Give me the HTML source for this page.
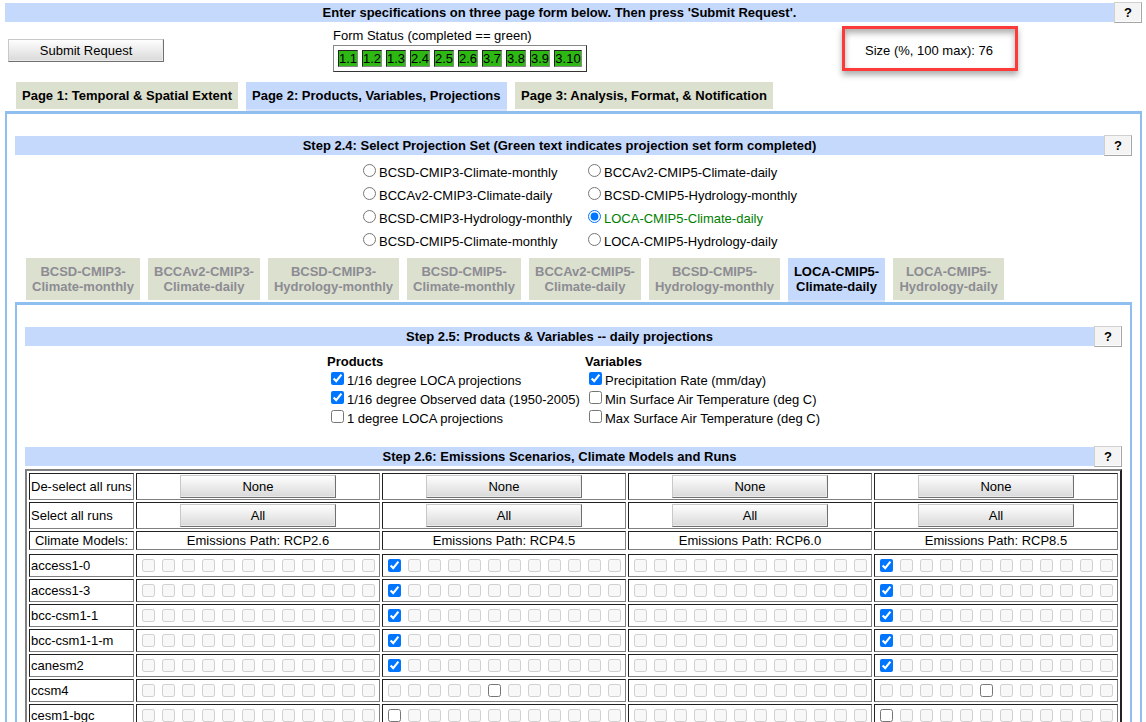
<!DOCTYPE html>
<html><head><meta charset="utf-8">
<style>
html,body{margin:0;padding:0;background:#fff;width:1146px;height:722px;overflow:hidden;position:relative}
body{font-family:"Liberation Sans",sans-serif;font-size:13px;color:#000}
.a{position:absolute}
.t{position:absolute;white-space:nowrap;line-height:15px}
.q{position:absolute;width:28px;height:21px;box-sizing:border-box;border:1px solid;border-color:#d0d0d0 #a6a6a6 #a6a6a6 #d0d0d0;background:#f4f4f4;font-weight:bold;text-align:center;line-height:19px;box-shadow:inset -1px -1px 0 #fbfbfb}
.btn{position:absolute;box-sizing:border-box;border:1px solid;border-color:#c8c8c8 #707070 #707070 #c8c8c8;background:linear-gradient(#fefefe,#d9d9d9);text-align:center;line-height:21px;box-shadow:inset -1px -1px 0 #ebebeb}
.g{position:absolute;height:17px;box-sizing:border-box;border:1px solid;border-color:#222 #8a8a8a #8a8a8a #222;background:#2db814;line-height:15px;text-align:center;font-size:13px}
.size{position:absolute;left:842px;top:26px;width:176px;height:45px;box-sizing:border-box;border:3px solid #fd3a3a;box-shadow:0 4px 6px rgba(0,0,0,.32), inset 0 4px 6px rgba(0,0,0,.32);text-align:center;line-height:15px;padding-top:14px;padding-right:2px}
.tab{position:absolute;box-sizing:border-box;padding:6px 6px 0 6px;font-weight:bold;line-height:15px;white-space:nowrap}
.st{text-align:center;padding-left:0;padding-right:0}
input{position:absolute;margin:0;width:13px;height:13px}
</style></head><body>
<div class="a" style="left:5px;top:3px;width:1109px;height:19px;background:#c5d9fd"></div>
<div class="t" style="left:5px;width:1109px;top:5px;text-align:center;font-weight:bold;">Enter specifications on three page form below. Then press 'Submit Request'.</div>
<div class="q" style="left:1114px;top:2px">?</div>
<div class="btn" style="left:8px;top:39px;width:156px;height:23px">Submit Request</div>
<div class="t" style="left:333px;top:28px;">Form Status (completed == green)</div>
<div class="a" style="left:333px;top:45px;width:254px;height:27px;box-sizing:border-box;border:1px solid;border-color:#888 #333 #333 #888"></div>
<div class="g" style="left:338px;top:50px;width:20px">1.1</div>
<div class="g" style="left:362px;top:50px;width:20px">1.2</div>
<div class="g" style="left:386px;top:50px;width:20px">1.3</div>
<div class="g" style="left:410px;top:50px;width:20px">2.4</div>
<div class="g" style="left:434px;top:50px;width:20px">2.5</div>
<div class="g" style="left:458px;top:50px;width:20px">2.6</div>
<div class="g" style="left:482px;top:50px;width:20px">3.7</div>
<div class="g" style="left:506px;top:50px;width:20px">3.8</div>
<div class="g" style="left:530px;top:50px;width:20px">3.9</div>
<div class="g" style="left:554px;top:50px;width:28px">3.10</div>
<div class="size">Size (%, 100 max): 76</div>
<div class="tab" style="left:16px;top:82px;width:222px;height:27px;background:#dce0ce;color:#000">Page 1: Temporal &amp; Spatial Extent</div>
<div class="tab" style="left:246px;top:82px;width:261px;height:29px;background:#c5d9fd;color:#000;box-shadow:inset 0 -2px 0 #d9e4fb">Page 2: Products, Variables, Projections</div>
<div class="tab" style="left:515px;top:82px;width:258px;height:27px;background:#dce0ce;color:#000">Page 3: Analysis, Format, &amp; Notification</div>
<div class="a" style="left:5px;top:111px;width:1137px;height:700px;box-sizing:border-box;border:2px solid #8fbfef;border-top-width:3px"></div>
<div class="a" style="left:15px;top:136px;width:1089px;height:19px;background:#c5d9fd"></div>
<div class="t" style="left:15px;width:1089px;top:138px;text-align:center;font-weight:bold;">Step 2.4: Select Projection Set (Green text indicates projection set form completed)</div>
<div class="q" style="left:1104px;top:135px">?</div>
<input type="radio" class="rb" style="left:363px;top:164px">
<div class="t" style="left:379px;top:165px;">BCSD-CMIP3-Climate-monthly</div>
<input type="radio" class="rb" style="left:588px;top:164px">
<div class="t" style="left:604px;top:165px;">BCCAv2-CMIP5-Climate-daily</div>
<input type="radio" class="rb" style="left:363px;top:187px">
<div class="t" style="left:379px;top:188px;">BCCAv2-CMIP3-Climate-daily</div>
<input type="radio" class="rb" style="left:588px;top:187px">
<div class="t" style="left:604px;top:188px;">BCSD-CMIP5-Hydrology-monthly</div>
<input type="radio" class="rb" style="left:363px;top:210px">
<div class="t" style="left:379px;top:211px;">BCSD-CMIP3-Hydrology-monthly</div>
<input type="radio" class="rb" style="left:588px;top:210px" checked>
<div class="t" style="left:604px;top:211px;color:#008000;">LOCA-CMIP5-Climate-daily</div>
<input type="radio" class="rb" style="left:363px;top:233px">
<div class="t" style="left:379px;top:234px;">BCSD-CMIP5-Climate-monthly</div>
<input type="radio" class="rb" style="left:588px;top:233px">
<div class="t" style="left:604px;top:234px;">LOCA-CMIP5-Hydrology-daily</div>
<div class="tab st" style="left:26px;top:258px;width:114px;height:42px;background:#dce0ce;color:#8c8c94">BCSD-CMIP3-<br>Climate-monthly</div>
<div class="tab st" style="left:148px;top:258px;width:112px;height:42px;background:#dce0ce;color:#8c8c94">BCCAv2-CMIP3-<br>Climate-daily</div>
<div class="tab st" style="left:268px;top:258px;width:131px;height:42px;background:#dce0ce;color:#8c8c94">BCSD-CMIP3-<br>Hydrology-monthly</div>
<div class="tab st" style="left:407px;top:258px;width:114px;height:42px;background:#dce0ce;color:#8c8c94">BCSD-CMIP5-<br>Climate-monthly</div>
<div class="tab st" style="left:529px;top:258px;width:112px;height:42px;background:#dce0ce;color:#8c8c94">BCCAv2-CMIP5-<br>Climate-daily</div>
<div class="tab st" style="left:649px;top:258px;width:131px;height:42px;background:#dce0ce;color:#8c8c94">BCSD-CMIP5-<br>Hydrology-monthly</div>
<div class="tab st" style="left:788px;top:258px;width:97px;height:44px;background:#c5d9fd;color:#000;box-shadow:inset 0 -2px 0 #d9e4fb">LOCA-CMIP5-<br>Climate-daily</div>
<div class="tab st" style="left:893px;top:258px;width:111px;height:42px;background:#dce0ce;color:#8c8c94">LOCA-CMIP5-<br>Hydrology-daily</div>
<div class="a" style="left:15px;top:302px;width:1117px;height:600px;box-sizing:border-box;border:2px solid #8fbfef;border-top-width:3px"></div>
<div class="a" style="left:25px;top:327px;width:1069px;height:19px;background:#c5d9fd"></div>
<div class="t" style="left:25px;width:1069px;top:329px;text-align:center;font-weight:bold;">Step 2.5: Products &amp; Variables -- daily projections</div>
<div class="q" style="left:1094px;top:326px">?</div>
<div class="t" style="left:327px;top:354px;font-weight:bold;">Products</div>
<input type="checkbox" class="cb" style="left:331px;top:372px" checked>
<div class="t" style="left:347px;top:373px;">1/16 degree LOCA projections</div>
<input type="checkbox" class="cb" style="left:331px;top:391px" checked>
<div class="t" style="left:347px;top:392px;">1/16 degree Observed data (1950-2005)</div>
<input type="checkbox" class="cb" style="left:331px;top:410px">
<div class="t" style="left:347px;top:411px;">1 degree LOCA projections</div>
<div class="t" style="left:585px;top:354px;font-weight:bold;">Variables</div>
<input type="checkbox" class="cb" style="left:589px;top:372px" checked>
<div class="t" style="left:605px;top:373px;">Precipitation Rate (mm/day)</div>
<input type="checkbox" class="cb" style="left:589px;top:391px">
<div class="t" style="left:605px;top:392px;">Min Surface Air Temperature (deg C)</div>
<input type="checkbox" class="cb" style="left:589px;top:410px">
<div class="t" style="left:605px;top:411px;">Max Surface Air Temperature (deg C)</div>
<div class="a" style="left:25px;top:447px;width:1069px;height:19px;background:#c5d9fd"></div>
<div class="t" style="left:25px;width:1069px;top:449px;text-align:center;font-weight:bold;">Step 2.6: Emissions Scenarios, Climate Models and Runs</div>
<div class="q" style="left:1094px;top:446px">?</div>
<div class="a" style="left:25px;top:469px;width:1097px;height:400px;box-sizing:border-box;border:2px solid;border-color:#808080 #222 #222 #808080"></div>
<div class="a" style="left:29px;top:473px;width:105px;height:27px;box-sizing:border-box;border:1px solid;border-color:#222 #808080 #808080 #222"></div>
<div class="t" style="left:31px;top:479px;">De-select all runs</div>
<div class="a" style="left:136px;top:473px;width:244px;height:27px;box-sizing:border-box;border:1px solid;border-color:#222 #808080 #808080 #222"></div>
<div class="btn" style="left:180px;top:475px;width:156px;height:23px">None</div>
<div class="a" style="left:382px;top:473px;width:244px;height:27px;box-sizing:border-box;border:1px solid;border-color:#222 #808080 #808080 #222"></div>
<div class="btn" style="left:426px;top:475px;width:156px;height:23px">None</div>
<div class="a" style="left:628px;top:473px;width:244px;height:27px;box-sizing:border-box;border:1px solid;border-color:#222 #808080 #808080 #222"></div>
<div class="btn" style="left:672px;top:475px;width:156px;height:23px">None</div>
<div class="a" style="left:874px;top:473px;width:244px;height:27px;box-sizing:border-box;border:1px solid;border-color:#222 #808080 #808080 #222"></div>
<div class="btn" style="left:918px;top:475px;width:156px;height:23px">None</div>
<div class="a" style="left:29px;top:502px;width:105px;height:27px;box-sizing:border-box;border:1px solid;border-color:#222 #808080 #808080 #222"></div>
<div class="t" style="left:31px;top:508px;">Select all runs</div>
<div class="a" style="left:136px;top:502px;width:244px;height:27px;box-sizing:border-box;border:1px solid;border-color:#222 #808080 #808080 #222"></div>
<div class="btn" style="left:180px;top:504px;width:156px;height:23px">All</div>
<div class="a" style="left:382px;top:502px;width:244px;height:27px;box-sizing:border-box;border:1px solid;border-color:#222 #808080 #808080 #222"></div>
<div class="btn" style="left:426px;top:504px;width:156px;height:23px">All</div>
<div class="a" style="left:628px;top:502px;width:244px;height:27px;box-sizing:border-box;border:1px solid;border-color:#222 #808080 #808080 #222"></div>
<div class="btn" style="left:672px;top:504px;width:156px;height:23px">All</div>
<div class="a" style="left:874px;top:502px;width:244px;height:27px;box-sizing:border-box;border:1px solid;border-color:#222 #808080 #808080 #222"></div>
<div class="btn" style="left:918px;top:504px;width:156px;height:23px">All</div>
<div class="a" style="left:29px;top:531px;width:105px;height:19px;box-sizing:border-box;border:1px solid;border-color:#222 #808080 #808080 #222"></div>
<div class="t" style="left:29px;width:105px;top:533px;text-align:center;">Climate Models:</div>
<div class="a" style="left:136px;top:531px;width:244px;height:19px;box-sizing:border-box;border:1px solid;border-color:#222 #808080 #808080 #222"></div>
<div class="t" style="left:136px;width:244px;top:533px;text-align:center;">Emissions Path: RCP2.6</div>
<div class="a" style="left:382px;top:531px;width:244px;height:19px;box-sizing:border-box;border:1px solid;border-color:#222 #808080 #808080 #222"></div>
<div class="t" style="left:382px;width:244px;top:533px;text-align:center;">Emissions Path: RCP4.5</div>
<div class="a" style="left:628px;top:531px;width:244px;height:19px;box-sizing:border-box;border:1px solid;border-color:#222 #808080 #808080 #222"></div>
<div class="t" style="left:628px;width:244px;top:533px;text-align:center;">Emissions Path: RCP6.0</div>
<div class="a" style="left:874px;top:531px;width:244px;height:19px;box-sizing:border-box;border:1px solid;border-color:#222 #808080 #808080 #222"></div>
<div class="t" style="left:874px;width:244px;top:533px;text-align:center;">Emissions Path: RCP8.5</div>
<div class="a" style="left:29px;top:554px;width:105px;height:23px;box-sizing:border-box;border:1px solid;border-color:#222 #808080 #808080 #222"></div>
<div class="t" style="left:31px;top:558px;">access1-0</div>
<div class="a" style="left:136px;top:554px;width:244px;height:23px;box-sizing:border-box;border:1px solid;border-color:#222 #808080 #808080 #222"></div>
<input type="checkbox" class="cb" style="left:142px;top:559px" disabled>
<input type="checkbox" class="cb" style="left:162px;top:559px" disabled>
<input type="checkbox" class="cb" style="left:182px;top:559px" disabled>
<input type="checkbox" class="cb" style="left:202px;top:559px" disabled>
<input type="checkbox" class="cb" style="left:222px;top:559px" disabled>
<input type="checkbox" class="cb" style="left:242px;top:559px" disabled>
<input type="checkbox" class="cb" style="left:262px;top:559px" disabled>
<input type="checkbox" class="cb" style="left:282px;top:559px" disabled>
<input type="checkbox" class="cb" style="left:302px;top:559px" disabled>
<input type="checkbox" class="cb" style="left:322px;top:559px" disabled>
<input type="checkbox" class="cb" style="left:342px;top:559px" disabled>
<input type="checkbox" class="cb" style="left:362px;top:559px" disabled>
<div class="a" style="left:382px;top:554px;width:244px;height:23px;box-sizing:border-box;border:1px solid;border-color:#222 #808080 #808080 #222"></div>
<input type="checkbox" class="cb" style="left:388px;top:559px" checked>
<input type="checkbox" class="cb" style="left:408px;top:559px" disabled>
<input type="checkbox" class="cb" style="left:428px;top:559px" disabled>
<input type="checkbox" class="cb" style="left:448px;top:559px" disabled>
<input type="checkbox" class="cb" style="left:468px;top:559px" disabled>
<input type="checkbox" class="cb" style="left:488px;top:559px" disabled>
<input type="checkbox" class="cb" style="left:508px;top:559px" disabled>
<input type="checkbox" class="cb" style="left:528px;top:559px" disabled>
<input type="checkbox" class="cb" style="left:548px;top:559px" disabled>
<input type="checkbox" class="cb" style="left:568px;top:559px" disabled>
<input type="checkbox" class="cb" style="left:588px;top:559px" disabled>
<input type="checkbox" class="cb" style="left:608px;top:559px" disabled>
<div class="a" style="left:628px;top:554px;width:244px;height:23px;box-sizing:border-box;border:1px solid;border-color:#222 #808080 #808080 #222"></div>
<input type="checkbox" class="cb" style="left:634px;top:559px" disabled>
<input type="checkbox" class="cb" style="left:654px;top:559px" disabled>
<input type="checkbox" class="cb" style="left:674px;top:559px" disabled>
<input type="checkbox" class="cb" style="left:694px;top:559px" disabled>
<input type="checkbox" class="cb" style="left:714px;top:559px" disabled>
<input type="checkbox" class="cb" style="left:734px;top:559px" disabled>
<input type="checkbox" class="cb" style="left:754px;top:559px" disabled>
<input type="checkbox" class="cb" style="left:774px;top:559px" disabled>
<input type="checkbox" class="cb" style="left:794px;top:559px" disabled>
<input type="checkbox" class="cb" style="left:814px;top:559px" disabled>
<input type="checkbox" class="cb" style="left:834px;top:559px" disabled>
<input type="checkbox" class="cb" style="left:854px;top:559px" disabled>
<div class="a" style="left:874px;top:554px;width:244px;height:23px;box-sizing:border-box;border:1px solid;border-color:#222 #808080 #808080 #222"></div>
<input type="checkbox" class="cb" style="left:880px;top:559px" checked>
<input type="checkbox" class="cb" style="left:900px;top:559px" disabled>
<input type="checkbox" class="cb" style="left:920px;top:559px" disabled>
<input type="checkbox" class="cb" style="left:940px;top:559px" disabled>
<input type="checkbox" class="cb" style="left:960px;top:559px" disabled>
<input type="checkbox" class="cb" style="left:980px;top:559px" disabled>
<input type="checkbox" class="cb" style="left:1000px;top:559px" disabled>
<input type="checkbox" class="cb" style="left:1020px;top:559px" disabled>
<input type="checkbox" class="cb" style="left:1040px;top:559px" disabled>
<input type="checkbox" class="cb" style="left:1060px;top:559px" disabled>
<input type="checkbox" class="cb" style="left:1080px;top:559px" disabled>
<input type="checkbox" class="cb" style="left:1100px;top:559px" disabled>
<div class="a" style="left:29px;top:579px;width:105px;height:23px;box-sizing:border-box;border:1px solid;border-color:#222 #808080 #808080 #222"></div>
<div class="t" style="left:31px;top:583px;">access1-3</div>
<div class="a" style="left:136px;top:579px;width:244px;height:23px;box-sizing:border-box;border:1px solid;border-color:#222 #808080 #808080 #222"></div>
<input type="checkbox" class="cb" style="left:142px;top:584px" disabled>
<input type="checkbox" class="cb" style="left:162px;top:584px" disabled>
<input type="checkbox" class="cb" style="left:182px;top:584px" disabled>
<input type="checkbox" class="cb" style="left:202px;top:584px" disabled>
<input type="checkbox" class="cb" style="left:222px;top:584px" disabled>
<input type="checkbox" class="cb" style="left:242px;top:584px" disabled>
<input type="checkbox" class="cb" style="left:262px;top:584px" disabled>
<input type="checkbox" class="cb" style="left:282px;top:584px" disabled>
<input type="checkbox" class="cb" style="left:302px;top:584px" disabled>
<input type="checkbox" class="cb" style="left:322px;top:584px" disabled>
<input type="checkbox" class="cb" style="left:342px;top:584px" disabled>
<input type="checkbox" class="cb" style="left:362px;top:584px" disabled>
<div class="a" style="left:382px;top:579px;width:244px;height:23px;box-sizing:border-box;border:1px solid;border-color:#222 #808080 #808080 #222"></div>
<input type="checkbox" class="cb" style="left:388px;top:584px" checked>
<input type="checkbox" class="cb" style="left:408px;top:584px" disabled>
<input type="checkbox" class="cb" style="left:428px;top:584px" disabled>
<input type="checkbox" class="cb" style="left:448px;top:584px" disabled>
<input type="checkbox" class="cb" style="left:468px;top:584px" disabled>
<input type="checkbox" class="cb" style="left:488px;top:584px" disabled>
<input type="checkbox" class="cb" style="left:508px;top:584px" disabled>
<input type="checkbox" class="cb" style="left:528px;top:584px" disabled>
<input type="checkbox" class="cb" style="left:548px;top:584px" disabled>
<input type="checkbox" class="cb" style="left:568px;top:584px" disabled>
<input type="checkbox" class="cb" style="left:588px;top:584px" disabled>
<input type="checkbox" class="cb" style="left:608px;top:584px" disabled>
<div class="a" style="left:628px;top:579px;width:244px;height:23px;box-sizing:border-box;border:1px solid;border-color:#222 #808080 #808080 #222"></div>
<input type="checkbox" class="cb" style="left:634px;top:584px" disabled>
<input type="checkbox" class="cb" style="left:654px;top:584px" disabled>
<input type="checkbox" class="cb" style="left:674px;top:584px" disabled>
<input type="checkbox" class="cb" style="left:694px;top:584px" disabled>
<input type="checkbox" class="cb" style="left:714px;top:584px" disabled>
<input type="checkbox" class="cb" style="left:734px;top:584px" disabled>
<input type="checkbox" class="cb" style="left:754px;top:584px" disabled>
<input type="checkbox" class="cb" style="left:774px;top:584px" disabled>
<input type="checkbox" class="cb" style="left:794px;top:584px" disabled>
<input type="checkbox" class="cb" style="left:814px;top:584px" disabled>
<input type="checkbox" class="cb" style="left:834px;top:584px" disabled>
<input type="checkbox" class="cb" style="left:854px;top:584px" disabled>
<div class="a" style="left:874px;top:579px;width:244px;height:23px;box-sizing:border-box;border:1px solid;border-color:#222 #808080 #808080 #222"></div>
<input type="checkbox" class="cb" style="left:880px;top:584px" checked>
<input type="checkbox" class="cb" style="left:900px;top:584px" disabled>
<input type="checkbox" class="cb" style="left:920px;top:584px" disabled>
<input type="checkbox" class="cb" style="left:940px;top:584px" disabled>
<input type="checkbox" class="cb" style="left:960px;top:584px" disabled>
<input type="checkbox" class="cb" style="left:980px;top:584px" disabled>
<input type="checkbox" class="cb" style="left:1000px;top:584px" disabled>
<input type="checkbox" class="cb" style="left:1020px;top:584px" disabled>
<input type="checkbox" class="cb" style="left:1040px;top:584px" disabled>
<input type="checkbox" class="cb" style="left:1060px;top:584px" disabled>
<input type="checkbox" class="cb" style="left:1080px;top:584px" disabled>
<input type="checkbox" class="cb" style="left:1100px;top:584px" disabled>
<div class="a" style="left:29px;top:604px;width:105px;height:23px;box-sizing:border-box;border:1px solid;border-color:#222 #808080 #808080 #222"></div>
<div class="t" style="left:31px;top:608px;">bcc-csm1-1</div>
<div class="a" style="left:136px;top:604px;width:244px;height:23px;box-sizing:border-box;border:1px solid;border-color:#222 #808080 #808080 #222"></div>
<input type="checkbox" class="cb" style="left:142px;top:609px" disabled>
<input type="checkbox" class="cb" style="left:162px;top:609px" disabled>
<input type="checkbox" class="cb" style="left:182px;top:609px" disabled>
<input type="checkbox" class="cb" style="left:202px;top:609px" disabled>
<input type="checkbox" class="cb" style="left:222px;top:609px" disabled>
<input type="checkbox" class="cb" style="left:242px;top:609px" disabled>
<input type="checkbox" class="cb" style="left:262px;top:609px" disabled>
<input type="checkbox" class="cb" style="left:282px;top:609px" disabled>
<input type="checkbox" class="cb" style="left:302px;top:609px" disabled>
<input type="checkbox" class="cb" style="left:322px;top:609px" disabled>
<input type="checkbox" class="cb" style="left:342px;top:609px" disabled>
<input type="checkbox" class="cb" style="left:362px;top:609px" disabled>
<div class="a" style="left:382px;top:604px;width:244px;height:23px;box-sizing:border-box;border:1px solid;border-color:#222 #808080 #808080 #222"></div>
<input type="checkbox" class="cb" style="left:388px;top:609px" checked>
<input type="checkbox" class="cb" style="left:408px;top:609px" disabled>
<input type="checkbox" class="cb" style="left:428px;top:609px" disabled>
<input type="checkbox" class="cb" style="left:448px;top:609px" disabled>
<input type="checkbox" class="cb" style="left:468px;top:609px" disabled>
<input type="checkbox" class="cb" style="left:488px;top:609px" disabled>
<input type="checkbox" class="cb" style="left:508px;top:609px" disabled>
<input type="checkbox" class="cb" style="left:528px;top:609px" disabled>
<input type="checkbox" class="cb" style="left:548px;top:609px" disabled>
<input type="checkbox" class="cb" style="left:568px;top:609px" disabled>
<input type="checkbox" class="cb" style="left:588px;top:609px" disabled>
<input type="checkbox" class="cb" style="left:608px;top:609px" disabled>
<div class="a" style="left:628px;top:604px;width:244px;height:23px;box-sizing:border-box;border:1px solid;border-color:#222 #808080 #808080 #222"></div>
<input type="checkbox" class="cb" style="left:634px;top:609px" disabled>
<input type="checkbox" class="cb" style="left:654px;top:609px" disabled>
<input type="checkbox" class="cb" style="left:674px;top:609px" disabled>
<input type="checkbox" class="cb" style="left:694px;top:609px" disabled>
<input type="checkbox" class="cb" style="left:714px;top:609px" disabled>
<input type="checkbox" class="cb" style="left:734px;top:609px" disabled>
<input type="checkbox" class="cb" style="left:754px;top:609px" disabled>
<input type="checkbox" class="cb" style="left:774px;top:609px" disabled>
<input type="checkbox" class="cb" style="left:794px;top:609px" disabled>
<input type="checkbox" class="cb" style="left:814px;top:609px" disabled>
<input type="checkbox" class="cb" style="left:834px;top:609px" disabled>
<input type="checkbox" class="cb" style="left:854px;top:609px" disabled>
<div class="a" style="left:874px;top:604px;width:244px;height:23px;box-sizing:border-box;border:1px solid;border-color:#222 #808080 #808080 #222"></div>
<input type="checkbox" class="cb" style="left:880px;top:609px" checked>
<input type="checkbox" class="cb" style="left:900px;top:609px" disabled>
<input type="checkbox" class="cb" style="left:920px;top:609px" disabled>
<input type="checkbox" class="cb" style="left:940px;top:609px" disabled>
<input type="checkbox" class="cb" style="left:960px;top:609px" disabled>
<input type="checkbox" class="cb" style="left:980px;top:609px" disabled>
<input type="checkbox" class="cb" style="left:1000px;top:609px" disabled>
<input type="checkbox" class="cb" style="left:1020px;top:609px" disabled>
<input type="checkbox" class="cb" style="left:1040px;top:609px" disabled>
<input type="checkbox" class="cb" style="left:1060px;top:609px" disabled>
<input type="checkbox" class="cb" style="left:1080px;top:609px" disabled>
<input type="checkbox" class="cb" style="left:1100px;top:609px" disabled>
<div class="a" style="left:29px;top:629px;width:105px;height:23px;box-sizing:border-box;border:1px solid;border-color:#222 #808080 #808080 #222"></div>
<div class="t" style="left:31px;top:633px;">bcc-csm1-1-m</div>
<div class="a" style="left:136px;top:629px;width:244px;height:23px;box-sizing:border-box;border:1px solid;border-color:#222 #808080 #808080 #222"></div>
<input type="checkbox" class="cb" style="left:142px;top:634px" disabled>
<input type="checkbox" class="cb" style="left:162px;top:634px" disabled>
<input type="checkbox" class="cb" style="left:182px;top:634px" disabled>
<input type="checkbox" class="cb" style="left:202px;top:634px" disabled>
<input type="checkbox" class="cb" style="left:222px;top:634px" disabled>
<input type="checkbox" class="cb" style="left:242px;top:634px" disabled>
<input type="checkbox" class="cb" style="left:262px;top:634px" disabled>
<input type="checkbox" class="cb" style="left:282px;top:634px" disabled>
<input type="checkbox" class="cb" style="left:302px;top:634px" disabled>
<input type="checkbox" class="cb" style="left:322px;top:634px" disabled>
<input type="checkbox" class="cb" style="left:342px;top:634px" disabled>
<input type="checkbox" class="cb" style="left:362px;top:634px" disabled>
<div class="a" style="left:382px;top:629px;width:244px;height:23px;box-sizing:border-box;border:1px solid;border-color:#222 #808080 #808080 #222"></div>
<input type="checkbox" class="cb" style="left:388px;top:634px" checked>
<input type="checkbox" class="cb" style="left:408px;top:634px" disabled>
<input type="checkbox" class="cb" style="left:428px;top:634px" disabled>
<input type="checkbox" class="cb" style="left:448px;top:634px" disabled>
<input type="checkbox" class="cb" style="left:468px;top:634px" disabled>
<input type="checkbox" class="cb" style="left:488px;top:634px" disabled>
<input type="checkbox" class="cb" style="left:508px;top:634px" disabled>
<input type="checkbox" class="cb" style="left:528px;top:634px" disabled>
<input type="checkbox" class="cb" style="left:548px;top:634px" disabled>
<input type="checkbox" class="cb" style="left:568px;top:634px" disabled>
<input type="checkbox" class="cb" style="left:588px;top:634px" disabled>
<input type="checkbox" class="cb" style="left:608px;top:634px" disabled>
<div class="a" style="left:628px;top:629px;width:244px;height:23px;box-sizing:border-box;border:1px solid;border-color:#222 #808080 #808080 #222"></div>
<input type="checkbox" class="cb" style="left:634px;top:634px" disabled>
<input type="checkbox" class="cb" style="left:654px;top:634px" disabled>
<input type="checkbox" class="cb" style="left:674px;top:634px" disabled>
<input type="checkbox" class="cb" style="left:694px;top:634px" disabled>
<input type="checkbox" class="cb" style="left:714px;top:634px" disabled>
<input type="checkbox" class="cb" style="left:734px;top:634px" disabled>
<input type="checkbox" class="cb" style="left:754px;top:634px" disabled>
<input type="checkbox" class="cb" style="left:774px;top:634px" disabled>
<input type="checkbox" class="cb" style="left:794px;top:634px" disabled>
<input type="checkbox" class="cb" style="left:814px;top:634px" disabled>
<input type="checkbox" class="cb" style="left:834px;top:634px" disabled>
<input type="checkbox" class="cb" style="left:854px;top:634px" disabled>
<div class="a" style="left:874px;top:629px;width:244px;height:23px;box-sizing:border-box;border:1px solid;border-color:#222 #808080 #808080 #222"></div>
<input type="checkbox" class="cb" style="left:880px;top:634px" checked>
<input type="checkbox" class="cb" style="left:900px;top:634px" disabled>
<input type="checkbox" class="cb" style="left:920px;top:634px" disabled>
<input type="checkbox" class="cb" style="left:940px;top:634px" disabled>
<input type="checkbox" class="cb" style="left:960px;top:634px" disabled>
<input type="checkbox" class="cb" style="left:980px;top:634px" disabled>
<input type="checkbox" class="cb" style="left:1000px;top:634px" disabled>
<input type="checkbox" class="cb" style="left:1020px;top:634px" disabled>
<input type="checkbox" class="cb" style="left:1040px;top:634px" disabled>
<input type="checkbox" class="cb" style="left:1060px;top:634px" disabled>
<input type="checkbox" class="cb" style="left:1080px;top:634px" disabled>
<input type="checkbox" class="cb" style="left:1100px;top:634px" disabled>
<div class="a" style="left:29px;top:654px;width:105px;height:23px;box-sizing:border-box;border:1px solid;border-color:#222 #808080 #808080 #222"></div>
<div class="t" style="left:31px;top:658px;">canesm2</div>
<div class="a" style="left:136px;top:654px;width:244px;height:23px;box-sizing:border-box;border:1px solid;border-color:#222 #808080 #808080 #222"></div>
<input type="checkbox" class="cb" style="left:142px;top:659px" disabled>
<input type="checkbox" class="cb" style="left:162px;top:659px" disabled>
<input type="checkbox" class="cb" style="left:182px;top:659px" disabled>
<input type="checkbox" class="cb" style="left:202px;top:659px" disabled>
<input type="checkbox" class="cb" style="left:222px;top:659px" disabled>
<input type="checkbox" class="cb" style="left:242px;top:659px" disabled>
<input type="checkbox" class="cb" style="left:262px;top:659px" disabled>
<input type="checkbox" class="cb" style="left:282px;top:659px" disabled>
<input type="checkbox" class="cb" style="left:302px;top:659px" disabled>
<input type="checkbox" class="cb" style="left:322px;top:659px" disabled>
<input type="checkbox" class="cb" style="left:342px;top:659px" disabled>
<input type="checkbox" class="cb" style="left:362px;top:659px" disabled>
<div class="a" style="left:382px;top:654px;width:244px;height:23px;box-sizing:border-box;border:1px solid;border-color:#222 #808080 #808080 #222"></div>
<input type="checkbox" class="cb" style="left:388px;top:659px" checked>
<input type="checkbox" class="cb" style="left:408px;top:659px" disabled>
<input type="checkbox" class="cb" style="left:428px;top:659px" disabled>
<input type="checkbox" class="cb" style="left:448px;top:659px" disabled>
<input type="checkbox" class="cb" style="left:468px;top:659px" disabled>
<input type="checkbox" class="cb" style="left:488px;top:659px" disabled>
<input type="checkbox" class="cb" style="left:508px;top:659px" disabled>
<input type="checkbox" class="cb" style="left:528px;top:659px" disabled>
<input type="checkbox" class="cb" style="left:548px;top:659px" disabled>
<input type="checkbox" class="cb" style="left:568px;top:659px" disabled>
<input type="checkbox" class="cb" style="left:588px;top:659px" disabled>
<input type="checkbox" class="cb" style="left:608px;top:659px" disabled>
<div class="a" style="left:628px;top:654px;width:244px;height:23px;box-sizing:border-box;border:1px solid;border-color:#222 #808080 #808080 #222"></div>
<input type="checkbox" class="cb" style="left:634px;top:659px" disabled>
<input type="checkbox" class="cb" style="left:654px;top:659px" disabled>
<input type="checkbox" class="cb" style="left:674px;top:659px" disabled>
<input type="checkbox" class="cb" style="left:694px;top:659px" disabled>
<input type="checkbox" class="cb" style="left:714px;top:659px" disabled>
<input type="checkbox" class="cb" style="left:734px;top:659px" disabled>
<input type="checkbox" class="cb" style="left:754px;top:659px" disabled>
<input type="checkbox" class="cb" style="left:774px;top:659px" disabled>
<input type="checkbox" class="cb" style="left:794px;top:659px" disabled>
<input type="checkbox" class="cb" style="left:814px;top:659px" disabled>
<input type="checkbox" class="cb" style="left:834px;top:659px" disabled>
<input type="checkbox" class="cb" style="left:854px;top:659px" disabled>
<div class="a" style="left:874px;top:654px;width:244px;height:23px;box-sizing:border-box;border:1px solid;border-color:#222 #808080 #808080 #222"></div>
<input type="checkbox" class="cb" style="left:880px;top:659px" checked>
<input type="checkbox" class="cb" style="left:900px;top:659px" disabled>
<input type="checkbox" class="cb" style="left:920px;top:659px" disabled>
<input type="checkbox" class="cb" style="left:940px;top:659px" disabled>
<input type="checkbox" class="cb" style="left:960px;top:659px" disabled>
<input type="checkbox" class="cb" style="left:980px;top:659px" disabled>
<input type="checkbox" class="cb" style="left:1000px;top:659px" disabled>
<input type="checkbox" class="cb" style="left:1020px;top:659px" disabled>
<input type="checkbox" class="cb" style="left:1040px;top:659px" disabled>
<input type="checkbox" class="cb" style="left:1060px;top:659px" disabled>
<input type="checkbox" class="cb" style="left:1080px;top:659px" disabled>
<input type="checkbox" class="cb" style="left:1100px;top:659px" disabled>
<div class="a" style="left:29px;top:679px;width:105px;height:23px;box-sizing:border-box;border:1px solid;border-color:#222 #808080 #808080 #222"></div>
<div class="t" style="left:31px;top:683px;">ccsm4</div>
<div class="a" style="left:136px;top:679px;width:244px;height:23px;box-sizing:border-box;border:1px solid;border-color:#222 #808080 #808080 #222"></div>
<input type="checkbox" class="cb" style="left:142px;top:684px" disabled>
<input type="checkbox" class="cb" style="left:162px;top:684px" disabled>
<input type="checkbox" class="cb" style="left:182px;top:684px" disabled>
<input type="checkbox" class="cb" style="left:202px;top:684px" disabled>
<input type="checkbox" class="cb" style="left:222px;top:684px" disabled>
<input type="checkbox" class="cb" style="left:242px;top:684px" disabled>
<input type="checkbox" class="cb" style="left:262px;top:684px" disabled>
<input type="checkbox" class="cb" style="left:282px;top:684px" disabled>
<input type="checkbox" class="cb" style="left:302px;top:684px" disabled>
<input type="checkbox" class="cb" style="left:322px;top:684px" disabled>
<input type="checkbox" class="cb" style="left:342px;top:684px" disabled>
<input type="checkbox" class="cb" style="left:362px;top:684px" disabled>
<div class="a" style="left:382px;top:679px;width:244px;height:23px;box-sizing:border-box;border:1px solid;border-color:#222 #808080 #808080 #222"></div>
<input type="checkbox" class="cb" style="left:388px;top:684px" disabled>
<input type="checkbox" class="cb" style="left:408px;top:684px" disabled>
<input type="checkbox" class="cb" style="left:428px;top:684px" disabled>
<input type="checkbox" class="cb" style="left:448px;top:684px" disabled>
<input type="checkbox" class="cb" style="left:468px;top:684px" disabled>
<input type="checkbox" class="cb" style="left:488px;top:684px" >
<input type="checkbox" class="cb" style="left:508px;top:684px" disabled>
<input type="checkbox" class="cb" style="left:528px;top:684px" disabled>
<input type="checkbox" class="cb" style="left:548px;top:684px" disabled>
<input type="checkbox" class="cb" style="left:568px;top:684px" disabled>
<input type="checkbox" class="cb" style="left:588px;top:684px" disabled>
<input type="checkbox" class="cb" style="left:608px;top:684px" disabled>
<div class="a" style="left:628px;top:679px;width:244px;height:23px;box-sizing:border-box;border:1px solid;border-color:#222 #808080 #808080 #222"></div>
<input type="checkbox" class="cb" style="left:634px;top:684px" disabled>
<input type="checkbox" class="cb" style="left:654px;top:684px" disabled>
<input type="checkbox" class="cb" style="left:674px;top:684px" disabled>
<input type="checkbox" class="cb" style="left:694px;top:684px" disabled>
<input type="checkbox" class="cb" style="left:714px;top:684px" disabled>
<input type="checkbox" class="cb" style="left:734px;top:684px" disabled>
<input type="checkbox" class="cb" style="left:754px;top:684px" disabled>
<input type="checkbox" class="cb" style="left:774px;top:684px" disabled>
<input type="checkbox" class="cb" style="left:794px;top:684px" disabled>
<input type="checkbox" class="cb" style="left:814px;top:684px" disabled>
<input type="checkbox" class="cb" style="left:834px;top:684px" disabled>
<input type="checkbox" class="cb" style="left:854px;top:684px" disabled>
<div class="a" style="left:874px;top:679px;width:244px;height:23px;box-sizing:border-box;border:1px solid;border-color:#222 #808080 #808080 #222"></div>
<input type="checkbox" class="cb" style="left:880px;top:684px" disabled>
<input type="checkbox" class="cb" style="left:900px;top:684px" disabled>
<input type="checkbox" class="cb" style="left:920px;top:684px" disabled>
<input type="checkbox" class="cb" style="left:940px;top:684px" disabled>
<input type="checkbox" class="cb" style="left:960px;top:684px" disabled>
<input type="checkbox" class="cb" style="left:980px;top:684px" >
<input type="checkbox" class="cb" style="left:1000px;top:684px" disabled>
<input type="checkbox" class="cb" style="left:1020px;top:684px" disabled>
<input type="checkbox" class="cb" style="left:1040px;top:684px" disabled>
<input type="checkbox" class="cb" style="left:1060px;top:684px" disabled>
<input type="checkbox" class="cb" style="left:1080px;top:684px" disabled>
<input type="checkbox" class="cb" style="left:1100px;top:684px" disabled>
<div class="a" style="left:29px;top:704px;width:105px;height:23px;box-sizing:border-box;border:1px solid;border-color:#222 #808080 #808080 #222"></div>
<div class="t" style="left:31px;top:708px;">cesm1-bgc</div>
<div class="a" style="left:136px;top:704px;width:244px;height:23px;box-sizing:border-box;border:1px solid;border-color:#222 #808080 #808080 #222"></div>
<input type="checkbox" class="cb" style="left:142px;top:709px" disabled>
<input type="checkbox" class="cb" style="left:162px;top:709px" disabled>
<input type="checkbox" class="cb" style="left:182px;top:709px" disabled>
<input type="checkbox" class="cb" style="left:202px;top:709px" disabled>
<input type="checkbox" class="cb" style="left:222px;top:709px" disabled>
<input type="checkbox" class="cb" style="left:242px;top:709px" disabled>
<input type="checkbox" class="cb" style="left:262px;top:709px" disabled>
<input type="checkbox" class="cb" style="left:282px;top:709px" disabled>
<input type="checkbox" class="cb" style="left:302px;top:709px" disabled>
<input type="checkbox" class="cb" style="left:322px;top:709px" disabled>
<input type="checkbox" class="cb" style="left:342px;top:709px" disabled>
<input type="checkbox" class="cb" style="left:362px;top:709px" disabled>
<div class="a" style="left:382px;top:704px;width:244px;height:23px;box-sizing:border-box;border:1px solid;border-color:#222 #808080 #808080 #222"></div>
<input type="checkbox" class="cb" style="left:388px;top:709px" >
<input type="checkbox" class="cb" style="left:408px;top:709px" disabled>
<input type="checkbox" class="cb" style="left:428px;top:709px" disabled>
<input type="checkbox" class="cb" style="left:448px;top:709px" disabled>
<input type="checkbox" class="cb" style="left:468px;top:709px" disabled>
<input type="checkbox" class="cb" style="left:488px;top:709px" disabled>
<input type="checkbox" class="cb" style="left:508px;top:709px" disabled>
<input type="checkbox" class="cb" style="left:528px;top:709px" disabled>
<input type="checkbox" class="cb" style="left:548px;top:709px" disabled>
<input type="checkbox" class="cb" style="left:568px;top:709px" disabled>
<input type="checkbox" class="cb" style="left:588px;top:709px" disabled>
<input type="checkbox" class="cb" style="left:608px;top:709px" disabled>
<div class="a" style="left:628px;top:704px;width:244px;height:23px;box-sizing:border-box;border:1px solid;border-color:#222 #808080 #808080 #222"></div>
<input type="checkbox" class="cb" style="left:634px;top:709px" disabled>
<input type="checkbox" class="cb" style="left:654px;top:709px" disabled>
<input type="checkbox" class="cb" style="left:674px;top:709px" disabled>
<input type="checkbox" class="cb" style="left:694px;top:709px" disabled>
<input type="checkbox" class="cb" style="left:714px;top:709px" disabled>
<input type="checkbox" class="cb" style="left:734px;top:709px" disabled>
<input type="checkbox" class="cb" style="left:754px;top:709px" disabled>
<input type="checkbox" class="cb" style="left:774px;top:709px" disabled>
<input type="checkbox" class="cb" style="left:794px;top:709px" disabled>
<input type="checkbox" class="cb" style="left:814px;top:709px" disabled>
<input type="checkbox" class="cb" style="left:834px;top:709px" disabled>
<input type="checkbox" class="cb" style="left:854px;top:709px" disabled>
<div class="a" style="left:874px;top:704px;width:244px;height:23px;box-sizing:border-box;border:1px solid;border-color:#222 #808080 #808080 #222"></div>
<input type="checkbox" class="cb" style="left:880px;top:709px" >
<input type="checkbox" class="cb" style="left:900px;top:709px" disabled>
<input type="checkbox" class="cb" style="left:920px;top:709px" disabled>
<input type="checkbox" class="cb" style="left:940px;top:709px" disabled>
<input type="checkbox" class="cb" style="left:960px;top:709px" disabled>
<input type="checkbox" class="cb" style="left:980px;top:709px" disabled>
<input type="checkbox" class="cb" style="left:1000px;top:709px" disabled>
<input type="checkbox" class="cb" style="left:1020px;top:709px" disabled>
<input type="checkbox" class="cb" style="left:1040px;top:709px" disabled>
<input type="checkbox" class="cb" style="left:1060px;top:709px" disabled>
<input type="checkbox" class="cb" style="left:1080px;top:709px" disabled>
<input type="checkbox" class="cb" style="left:1100px;top:709px" disabled>
<div class="a" style="left:29px;top:729px;width:105px;height:23px;box-sizing:border-box;border:1px solid;border-color:#222 #808080 #808080 #222"></div>
<div class="t" style="left:31px;top:733px;">cesm1-cam5</div>
<div class="a" style="left:136px;top:729px;width:244px;height:23px;box-sizing:border-box;border:1px solid;border-color:#222 #808080 #808080 #222"></div>
<input type="checkbox" class="cb" style="left:142px;top:734px" disabled>
<input type="checkbox" class="cb" style="left:162px;top:734px" disabled>
<input type="checkbox" class="cb" style="left:182px;top:734px" disabled>
<input type="checkbox" class="cb" style="left:202px;top:734px" disabled>
<input type="checkbox" class="cb" style="left:222px;top:734px" disabled>
<input type="checkbox" class="cb" style="left:242px;top:734px" disabled>
<input type="checkbox" class="cb" style="left:262px;top:734px" disabled>
<input type="checkbox" class="cb" style="left:282px;top:734px" disabled>
<input type="checkbox" class="cb" style="left:302px;top:734px" disabled>
<input type="checkbox" class="cb" style="left:322px;top:734px" disabled>
<input type="checkbox" class="cb" style="left:342px;top:734px" disabled>
<input type="checkbox" class="cb" style="left:362px;top:734px" disabled>
<div class="a" style="left:382px;top:729px;width:244px;height:23px;box-sizing:border-box;border:1px solid;border-color:#222 #808080 #808080 #222"></div>
<input type="checkbox" class="cb" style="left:388px;top:734px" disabled>
<input type="checkbox" class="cb" style="left:408px;top:734px" disabled>
<input type="checkbox" class="cb" style="left:428px;top:734px" disabled>
<input type="checkbox" class="cb" style="left:448px;top:734px" disabled>
<input type="checkbox" class="cb" style="left:468px;top:734px" disabled>
<input type="checkbox" class="cb" style="left:488px;top:734px" disabled>
<input type="checkbox" class="cb" style="left:508px;top:734px" disabled>
<input type="checkbox" class="cb" style="left:528px;top:734px" disabled>
<input type="checkbox" class="cb" style="left:548px;top:734px" disabled>
<input type="checkbox" class="cb" style="left:568px;top:734px" disabled>
<input type="checkbox" class="cb" style="left:588px;top:734px" disabled>
<input type="checkbox" class="cb" style="left:608px;top:734px" disabled>
<div class="a" style="left:628px;top:729px;width:244px;height:23px;box-sizing:border-box;border:1px solid;border-color:#222 #808080 #808080 #222"></div>
<input type="checkbox" class="cb" style="left:634px;top:734px" disabled>
<input type="checkbox" class="cb" style="left:654px;top:734px" disabled>
<input type="checkbox" class="cb" style="left:674px;top:734px" disabled>
<input type="checkbox" class="cb" style="left:694px;top:734px" disabled>
<input type="checkbox" class="cb" style="left:714px;top:734px" disabled>
<input type="checkbox" class="cb" style="left:734px;top:734px" disabled>
<input type="checkbox" class="cb" style="left:754px;top:734px" disabled>
<input type="checkbox" class="cb" style="left:774px;top:734px" disabled>
<input type="checkbox" class="cb" style="left:794px;top:734px" disabled>
<input type="checkbox" class="cb" style="left:814px;top:734px" disabled>
<input type="checkbox" class="cb" style="left:834px;top:734px" disabled>
<input type="checkbox" class="cb" style="left:854px;top:734px" disabled>
<div class="a" style="left:874px;top:729px;width:244px;height:23px;box-sizing:border-box;border:1px solid;border-color:#222 #808080 #808080 #222"></div>
<input type="checkbox" class="cb" style="left:880px;top:734px" disabled>
<input type="checkbox" class="cb" style="left:900px;top:734px" disabled>
<input type="checkbox" class="cb" style="left:920px;top:734px" disabled>
<input type="checkbox" class="cb" style="left:940px;top:734px" disabled>
<input type="checkbox" class="cb" style="left:960px;top:734px" disabled>
<input type="checkbox" class="cb" style="left:980px;top:734px" disabled>
<input type="checkbox" class="cb" style="left:1000px;top:734px" disabled>
<input type="checkbox" class="cb" style="left:1020px;top:734px" disabled>
<input type="checkbox" class="cb" style="left:1040px;top:734px" disabled>
<input type="checkbox" class="cb" style="left:1060px;top:734px" disabled>
<input type="checkbox" class="cb" style="left:1080px;top:734px" disabled>
<input type="checkbox" class="cb" style="left:1100px;top:734px" disabled>
</body></html>
